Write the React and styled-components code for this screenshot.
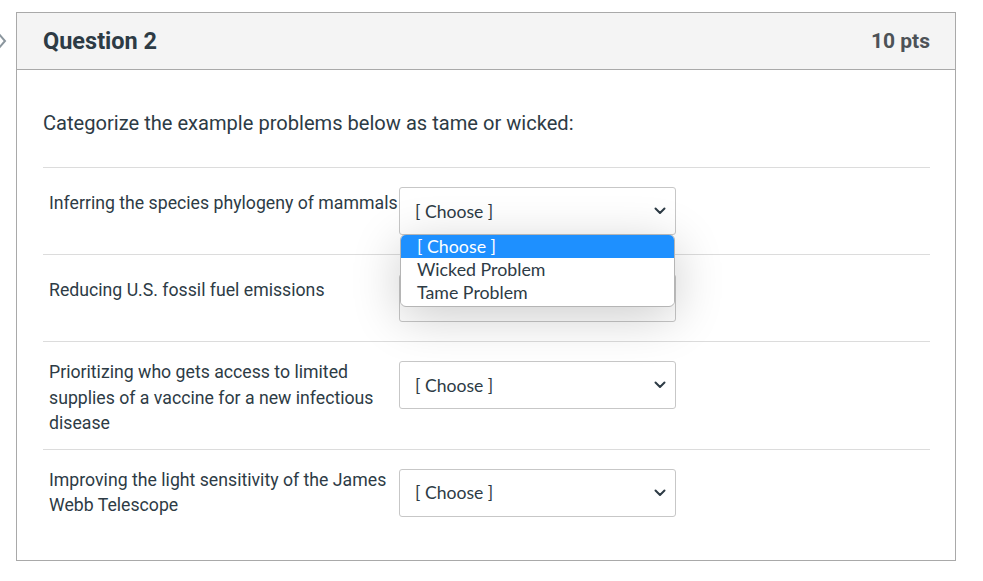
import React from "react";
import styled, { createGlobalStyle } from "styled-components";

const GlobalStyle = createGlobalStyle`
  html, body {
    margin: 0;
    padding: 0;
    background: #fff;
  }
  body {
    font-family: Roboto, "Liberation Sans", sans-serif;
    color: #2d3b45;
  }
`;

const rows = [
  { id: 1, label: "Inferring the species phylogeny of mammals", single: true, open: true },
  { id: 2, label: "Reducing U.S. fossil fuel emissions", single: true },
  {
    id: 3,
    label:
      "Prioritizing who gets access to limited supplies of a vaccine for a new infectious disease",
  },
  { id: 4, label: "Improving the light sensitivity of the James Webb Telescope" },
];

const options = ["[ Choose ]", "Wicked Problem", "Tame Problem"];

const Chevron = () => (
  <svg width="12" height="8" viewBox="0 0 12 8">
    <path
      d="M1.5 1.5 L6 6 L10.5 1.5"
      fill="none"
      stroke="#2d3b45"
      strokeWidth="2"
      strokeLinecap="round"
      strokeLinejoin="round"
    />
  </svg>
);

const App = () => {
  return (
    <Page>
      <GlobalStyle />
      <SideArrow>
        <svg width="10" height="18" viewBox="0 0 10 18">
          <path
            d="M-2 1 L5 9 L-2 17"
            fill="none"
            stroke="#8b969e"
            strokeWidth="2"
          />
        </svg>
      </SideArrow>
      <Card>
        <Header>
          <Title>Question 2</Title>
          <Points>10 pts</Points>
        </Header>
        <Body>
          <Prompt>Categorize the example problems below as tame or wicked:</Prompt>
          <Rows>
            {rows.map((row) => (
              <Row key={row.id}>
                <Label $single={row.single}>{row.label}</Label>
                <SelectWrap>
                  <Select>
                    <span>[ Choose ]</span>
                    <Chevron />
                  </Select>
                  {row.open && (
                    <OptionList>
                      {options.map((opt, i) => (
                        <Option key={opt} $active={i === 0}>
                          {opt}
                        </Option>
                      ))}
                    </OptionList>
                  )}
                </SelectWrap>
              </Row>
            ))}
          </Rows>
        </Body>
      </Card>
    </Page>
  );
};

const Page = styled.div`
  position: relative;
  padding: 12px 0 0 16px;
  width: 940px;
`;

const SideArrow = styled.div`
  position: absolute;
  left: 0;
  top: 32px;
`;

const Card = styled.div`
  border: 1px solid #a9a9a9;
  background: #fff;
`;

const Header = styled.div`
  display: flex;
  align-items: center;
  justify-content: space-between;
  height: 56px;
  padding: 0 25px 0 26px;
  background: #f4f4f4;
  border-bottom: 1px solid #a9a9a9;
`;

const Title = styled.h2`
  margin: 0;
  font-size: 23.5px;
  font-weight: 700;
  color: #2d3b45;
`;

const Points = styled.div`
  font-size: 21px;
  font-weight: 700;
  color: #4d5257;
`;

const Body = styled.div`
  padding: 41px 25px 24px 26px;
`;

const Prompt = styled.p`
  margin: 0 0 32px;
  font-size: 20.1px;
  line-height: 24px;
  color: #2d3b45;
`;

const Rows = styled.div`
  display: flex;
  flex-direction: column;
`;

const Row = styled.div`
  display: flex;
  align-items: flex-start;
  padding: 18px 0 12px;
  border-top: 1px solid #dcdcdc;
`;

const Label = styled.div`
  width: 350px;
  padding: ${(p) => (p.$single ? "5px" : "0")} 0 0 6px;
  flex-shrink: 0;
  font-size: 17.7px;
  line-height: 25.5px;
  color: #2d3b45;
`;

const SelectWrap = styled.div`
  position: relative;
  width: 277px;
  margin: 1px 0 7px;
`;

const Select = styled.div`
  display: flex;
  align-items: center;
  justify-content: space-between;
  box-sizing: border-box;
  height: 48px;
  padding: 0 9px 0 15px;
  border: 1px solid #c7c7c7;
  border-radius: 3px;
  background: #fff;
  font-family: Lato, "Liberation Sans", sans-serif;
  font-size: 17.6px;
  color: #2d3b45;
`;

const OptionList = styled.div`
  position: absolute;
  top: 47px;
  left: 1px;
  right: 1px;
  z-index: 2;
  padding-bottom: 2px;
  border: 1px solid #b5b5b5;
  border-radius: 6px;
  overflow: hidden;
  background: #fff;
  box-shadow: 0 10px 50px rgba(0, 0, 0, 0.2);
`;

const Option = styled.div`
  height: 23px;
  line-height: 23px;
  padding-left: 16px;
  font-family: Lato, "Liberation Sans", sans-serif;
  font-size: 17.8px;
  background: ${(p) => (p.$active ? "#1e90ff" : "#fff")};
  color: ${(p) => (p.$active ? "#fff" : "#2d3b45")};
`;

export default App;
